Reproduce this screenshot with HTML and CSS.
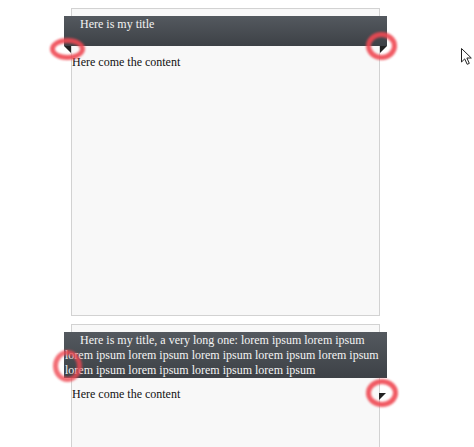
FILE: index.html
```html
<!DOCTYPE html>
<html>
<head>
<meta charset="utf-8">
<link rel="stylesheet" href="styles.css">
</head>
<body>
<div class="page">
  <div class="box box-first">
    <div class="title">Here is my title</div>
    <span class="fold fold-left fold-first"></span>
    <span class="fold fold-right fold-first"></span>
    <p class="content">Here come the content</p>
  </div>
  <div class="box box-second">
    <div class="title">Here is my title, a very long one: lorem ipsum lorem ipsum lorem ipsum lorem ipsum lorem ipsum lorem ipsum lorem ipsum lorem ipsum lorem ipsum lorem ipsum lorem ipsum</div>
    <span class="fold fold-right fold-second"></span>
    <p class="content">Here come the content</p>
  </div>
  <span class="mark mark-a"></span>
  <span class="mark mark-b"></span>
  <span class="mark mark-c"></span>
  <span class="mark mark-d"></span>
  <svg class="cursor" width="14" height="19" viewBox="0 0 14 19">
    <path d="M1.5 1.5 L1.5 15 L4.7 11.9 L7.2 17.3 L9.3 16.4 L6.9 11 L11.3 11 Z" fill="#fff" stroke="#222" stroke-width="1" stroke-linejoin="round"/>
  </svg>
</div>
</body>
</html>
```
FILE: styles.css
```css
html, body {
  margin: 0;
  padding: 0;
  background: #fff;
}
body {
  font-family: "Liberation Serif", "Times New Roman", serif;
  font-size: 12px;
  color: #111;
}
.page {
  position: relative;
  height: 447px;
  overflow: hidden;
  padding: 8px 0 0 71px;
  box-sizing: border-box;
  display: flex;
  flex-direction: column;
  gap: 8px;
}
.box {
  position: relative;
  width: 307px;
  flex: none;
  border: 1px solid #d2d2d2;
  background: #f8f8f8;
}
.box-first {
  height: 306px;
}
.box-second {
  height: 300px;
}
.title {
  margin: 7px -8px 0 -8px;
  min-height: 30px;
  box-sizing: border-box;
  padding: 1px 6px 0 1px;
  text-indent: 15px;
  line-height: 15px;
  color: #f4f4f4;
  background: linear-gradient(#54595f, #3d4146);
}
.fold {
  position: absolute;
  width: 0;
  height: 0;
  border-top: 7px solid #222;
}
.fold-left {
  left: -8px;
  border-left: 7px solid transparent;
}
.fold-right {
  right: -8px;
  border-right: 7px solid transparent;
}
.fold-first {
  top: 37px;
}
.fold-second {
  top: 68px;
  right: -7px;
}
.content {
  margin: 9px 0 0 0;
  line-height: 15px;
}
.mark {
  position: absolute;
  box-sizing: border-box;
  border: 5px solid #ef4953;
  border-radius: 50%;
  filter: blur(1.2px);
  opacity: 0.9;
}
.mark-a {
  left: 50px;
  top: 38px;
  width: 35px;
  height: 22px;
}
.mark-b {
  left: 366px;
  top: 32px;
  width: 31px;
  height: 28px;
}
.mark-c {
  left: 53px;
  top: 350px;
  width: 29px;
  height: 32px;
  opacity: 0.8;
}
.mark-d {
  left: 366px;
  top: 379px;
  width: 32px;
  height: 28px;
}
.cursor {
  position: absolute;
  left: 460px;
  top: 47px;
}
```
